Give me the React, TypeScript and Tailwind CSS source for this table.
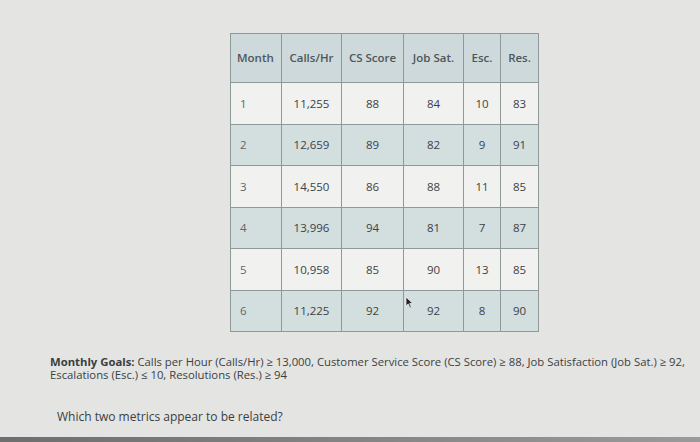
const ROWS = [
  { month: 1, calls: "11,255", cs: 88, job: 84, esc: 10, res: 83 },
  { month: 2, calls: "12,659", cs: 89, job: 82, esc: 9, res: 91 },
  { month: 3, calls: "14,550", cs: 86, job: 88, esc: 11, res: 85 },
  { month: 4, calls: "13,996", cs: 94, job: 81, esc: 7, res: 87 },
  { month: 5, calls: "10,958", cs: 85, job: 90, esc: 13, res: 85 },
  { month: 6, calls: "11,225", cs: 92, job: 92, esc: 8, res: 90 },
];

const HEADERS = ["Month", "Calls/Hr", "CS Score", "Job Sat.", "Esc.", "Res."];

function Cursor() {
  return (
    <svg className="absolute left-[405px] top-[296px]" width="9" height="13" viewBox="0 0 9 13">
      <path d="M1 1 L1 10 L3.2 8 L5 12 L6.4 11.3 L4.7 7.5 L7.8 7.5 Z" fill="#222" stroke="#eee" strokeWidth="0.8" />
    </svg>
  );
}

export default function App() {
  return (
    <div className="relative flex h-[442px] w-[700px] flex-col overflow-hidden bg-[#e4e4e2] font-['Open_Sans',sans-serif] text-[#3d4244]">
      <div className="pl-[230px] pt-[33px]">
        <table className="w-[308px] table-fixed border-collapse border border-[#8f9999] text-[11.5px]">
          <colgroup>
            <col className="w-[51px]" />
            <col className="w-[60px]" />
            <col className="w-[62px]" />
            <col className="w-[60px]" />
            <col className="w-[37px]" />
            <col className="w-[38px]" />
          </colgroup>
          <thead>
            <tr className="h-[49px] bg-[#cdd9db]">
              {HEADERS.map((h, i) => (
                <th
                  key={h}
                  className={`border border-[#8f9999] font-semibold text-[#4d5759] ${i === 0 ? "pl-[6px] text-left" : "text-center"}`}
                >
                  {h}
                </th>
              ))}
            </tr>
          </thead>
          <tbody>
            {ROWS.map((r) => (
              <tr key={r.month} className={`h-[41.5px] ${r.month % 2 === 0 ? "bg-[#d3dedf]" : "bg-[#f1f1ef]"}`}>
                <td className="border border-[#8f9999] pl-[9px] text-left text-[#60686a]">{r.month}</td>
                <td className="border border-[#8f9999] text-center">{r.calls}</td>
                <td className="border border-[#8f9999] text-center">{r.cs}</td>
                <td className="border border-[#8f9999] text-center">{r.job}</td>
                <td className="border border-[#8f9999] text-center">{r.esc}</td>
                <td className="border border-[#8f9999] text-center">{r.res}</td>
              </tr>
            ))}
          </tbody>
        </table>
      </div>

      <p className="mt-[23px] whitespace-nowrap pl-[50px] text-[11.3px] leading-[13px] text-[#3a3f42]">
        <span className="font-bold">Monthly Goals:</span> Calls per Hour (Calls/Hr) ≥ 13,000, Customer Service Score (CS Score) ≥ 88, Job Satisfaction (Job Sat.) ≥ 92,
        <br />
        Escalations (Esc.) ≤ 10, Resolutions (Res.) ≥ 94
      </p>

      <p className="mt-[27px] pl-[57px] text-[12px] text-[#3a3f42]">Which two metrics appear to be related?</p>

      <div className="mt-auto h-[5px] bg-gradient-to-r from-[#6e6e6e] to-[#9a9a9a]" />
      <Cursor />
    </div>
  );
}
